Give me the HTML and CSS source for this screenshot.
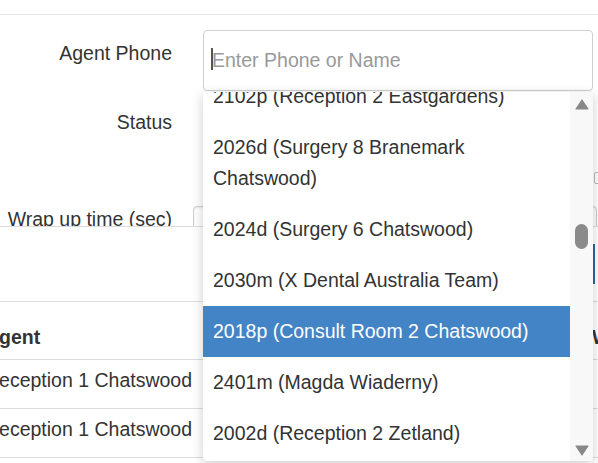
FILE: index.html
```html
<!DOCTYPE html>
<html>
<head>
<meta charset="utf-8">
<link rel="stylesheet" href="styles.css">
</head>
<body>
<div class="page">
  <div class="modal-body">
    <div class="topbar"></div>
    <div class="form">
      <div class="row row-phone">
        <label class="lbl">Agent Phone</label>
        <div class="ctrl">
          <div class="combo">
            <input class="phone" type="text" placeholder="Enter Phone or Name">
            <span class="caret"></span>
            <div class="dropdown">
              <ul class="list">
                <li>2102p (Reception 2 Eastgardens)</li>
                <li>2026d (Surgery 8 Branemark Chatswood)</li>
                <li>2024d (Surgery 6 Chatswood)</li>
                <li>2030m (X Dental Australia Team)</li>
                <li class="active">2018p (Consult Room 2 Chatswood)</li>
                <li>2401m (Magda Wiaderny)</li>
                <li>2002d (Reception 2 Zetland)</li>
                <li>2003d (Reception 3 Zetland)</li>
              </ul>
              <div class="sbar">
                <svg class="arrow up" width="14" height="11" viewBox="0 0 14 11"><polygon points="7,1 13,10 1,10" fill="#888" stroke="#888" stroke-width="1.2" stroke-linejoin="round"/></svg>
                <span class="thumb"></span>
                <svg class="arrow down" width="14" height="11" viewBox="0 0 14 11"><polygon points="1,1 13,1 7,10" fill="#888" stroke="#888" stroke-width="1.2" stroke-linejoin="round"/></svg>
              </div>
            </div>
          </div>
        </div>
      </div>
      <div class="row row-status">
        <label class="lbl">Status</label>
        <div class="ctrl"><span class="chk"></span></div>
      </div>
      <div class="row row-wrap">
        <label class="lbl">Wrap up time (sec)</label>
        <div class="ctrl"><input class="wrap-input" type="text"></div>
      </div>
    </div>
  </div>
  <div class="mid"><span class="btn-edge"></span></div>
  <table class="grid">
    <colgroup><col class="c1"><col class="c2"></colgroup>
    <thead>
      <tr><th>Agent</th><th>Wrap up</th></tr>
    </thead>
    <tbody>
      <tr><td>Reception 1 Chatswood</td><td></td></tr>
      <tr><td>Reception 1 Chatswood</td><td></td></tr>
    </tbody>
  </table>
</div>
</body>
</html>
```

FILE: styles.css
```css
html, body {
  margin: 0;
  padding: 0;
  overflow: hidden;
  background: #fff;
}
body {
  font-family: "Liberation Sans", Arial, sans-serif;
  font-size: 19.5px;
  color: #333;
}
.page {
  width: 598px;
  height: 463px;
  overflow: hidden;
}
.modal-body {
  border-bottom: 1px solid #dcdcdc;
}
.topbar {
  height: 14px;
  border-bottom: 1px solid #e8e8e8;
}
.form {
  padding-top: 15px;
}
.row {
  display: grid;
  grid-template-columns: 172px 390px;
  column-gap: 31px;
  margin-bottom: 8px;
}
.row-phone { height: 61px; }
.row-status { height: 89px; }
.row-wrap {
  height: 30px;
  margin-bottom: 0;
  overflow: hidden;
}
.lbl {
  text-align: right;
  padding-top: 8px;
  line-height: 31px;
  white-space: nowrap;
}
.ctrl { min-width: 0; }
.combo {
  position: relative;
  width: 390px;
}
.phone {
  box-sizing: border-box;
  display: block;
  width: 390px;
  height: 61px;
  margin: 0;
  border: 1px solid #cfcfcf;
  border-radius: 4px;
  padding: 0 8px;
  font-family: "Liberation Sans", Arial, sans-serif;
  font-size: 19.5px;
  color: #333;
  outline: none;
  background: #fff;
}
.phone::placeholder { color: #999; }
.caret {
  position: absolute;
  left: 8px;
  top: 18px;
  width: 1.5px;
  height: 22px;
  background: #555;
}
.dropdown {
  position: absolute;
  top: 62px;
  left: 0;
  width: 390px;
  height: 369px;
  background: #fff;
  border-radius: 0 0 4px 4px;
  box-shadow: 0 3px 12px rgba(0,0,0,0.2);
  display: flex;
  overflow: hidden;
  z-index: 10;
}
.list {
  flex: 0 0 367px;
  list-style: none;
  margin: -21px 0 0 0;
  padding: 0;
}
.list li {
  padding: 10px 10px 10px;
  line-height: 31px;
  color: #333;
}
.list li.active {
  background: #4384c6;
  color: #fff;
}
.sbar {
  flex: 0 0 23px;
  background: #f8f8f8;
  display: flex;
  flex-direction: column;
  align-items: center;
  padding-top: 7px;
  padding-bottom: 5px;
  box-sizing: border-box;
}
.arrow { display: block; }
.thumb {
  display: block;
  width: 13px;
  height: 25px;
  margin-top: 114px;
  border-radius: 6.5px;
  background: #8a8a8a;
}
.arrow.down { margin-top: auto; }
.chk {
  display: block;
  margin-left: 391px;
  margin-top: 73px;
  width: 14px;
  height: 10px;
  border: 1px solid #bbb;
  border-radius: 2px;
}
.wrap-input {
  box-sizing: border-box;
  display: block;
  width: 404px;
  height: 40px;
  margin: 10px 0 0 -10px;
  border: 1px solid #cfcfcf;
  border-radius: 4px;
  box-shadow: inset 0 1px 2px rgba(0,0,0,0.08);
  background: #fff;
}
.mid {
  height: 74px;
  overflow: hidden;
}
.btn-edge {
  display: block;
  margin-left: 593px;
  margin-top: 17px;
  width: 100px;
  height: 40px;
  border-left: 2px solid #2b64a8;
}
.grid {
  margin-left: -30px;
  width: 807px;
  table-layout: fixed;
  border-collapse: separate;
  border-spacing: 0;
}
.c1 { width: 607px; }
.c2 { width: 200px; }
.grid th {
  text-align: left;
  font-weight: bold;
  padding: 20px 15px 6px;
  line-height: 31px;
  border-top: 1px solid #ddd;
  border-bottom: 1px solid #ddd;
  white-space: nowrap;
}
.grid td {
  padding: 5px 15px 12px;
  line-height: 31px;
  border-bottom: 1px solid #ddd;
  white-space: nowrap;
}
```
